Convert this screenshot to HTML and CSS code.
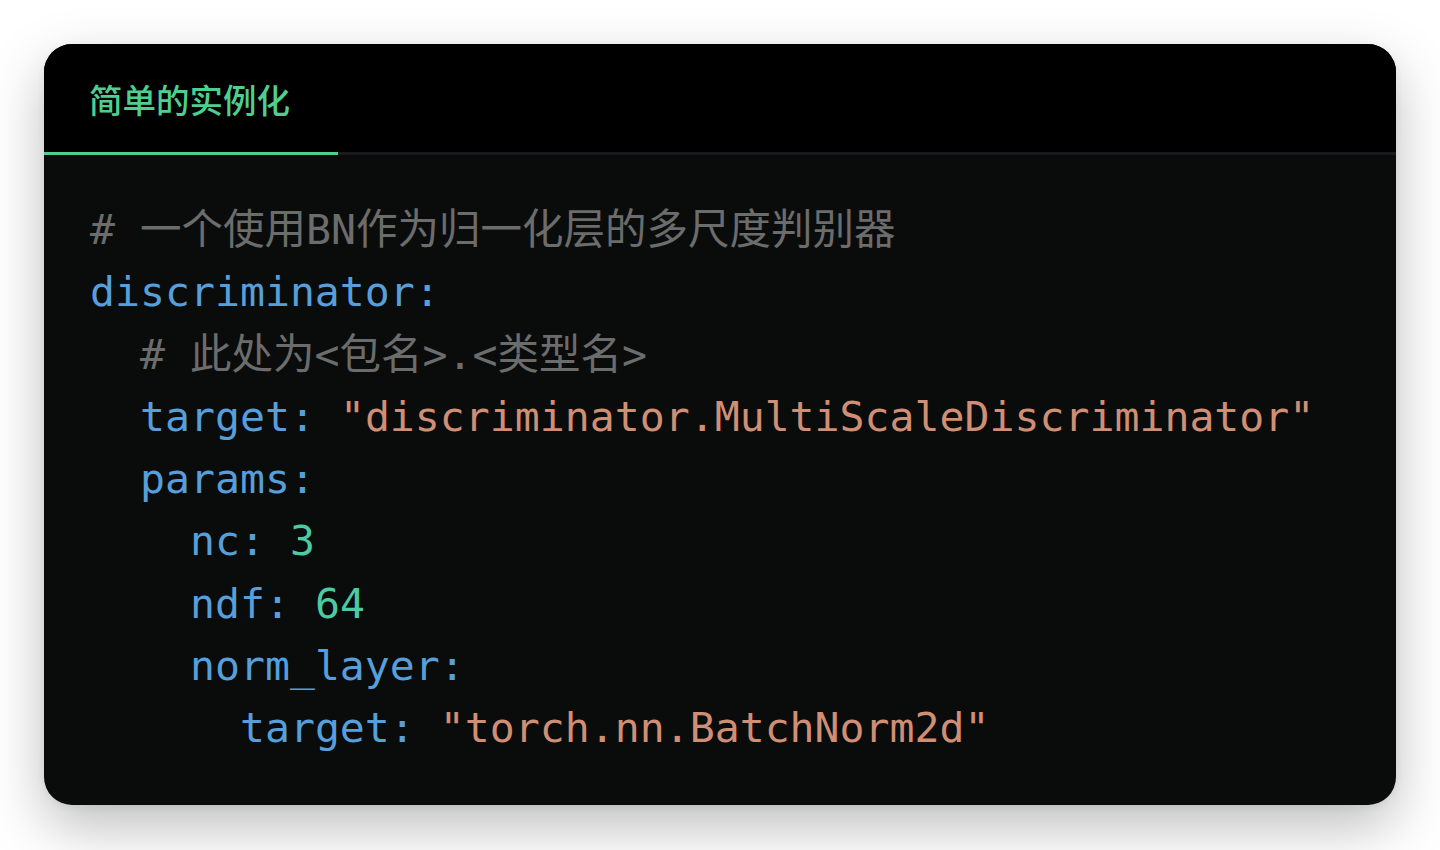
FILE: index.html
```html
<!DOCTYPE html>
<html lang="zh">
<head>
<meta charset="utf-8">
<title>简单的实例化</title>
<link rel="stylesheet" href="styles.css">
</head>
<body>
<div class="card">
  <div class="tabs">
    <div class="tab">简单的实例化</div>
  </div>
  <pre class="code"><span class="c"># 一个使用BN作为归一化层的多尺度判别器</span>
<span class="k">discriminator:</span>
  <span class="c"># 此处为&lt;包名&gt;.&lt;类型名&gt;</span>
  <span class="k">target:</span> <span class="s">"discriminator.MultiScaleDiscriminator"</span>
  <span class="k">params:</span>
    <span class="k">nc:</span> <span class="n">3</span>
    <span class="k">ndf:</span> <span class="n">64</span>
    <span class="k">norm_layer:</span>
      <span class="k">target:</span> <span class="s">"torch.nn.BatchNorm2d"</span></pre>
</div>
</body>
</html>
```

FILE: styles.css
```css
html, body {
  margin: 0;
  padding: 0;
  background: #ffffff;
}

body {
  padding: 44px 44px 0 44px;
  height: 850px;
  box-sizing: border-box;
  overflow: hidden;
}

.card {
  width: 1352px;
  border-radius: 28px;
  overflow: hidden;
  background: #0a0c0c;
  box-shadow: 0 22px 56px rgba(0, 0, 0, 0.26), 0 2px 8px rgba(0, 0, 0, 0.06);
}

.tabs {
  display: flex;
  background: #000000;
  border-bottom: 3px solid #171b1b;
  height: 108px;
}

.tab {
  display: flex;
  align-items: center;
  box-sizing: border-box;
  height: 111px;
  margin-bottom: -3px;
  padding: 0 0 0 45px;
  width: 294px;
  border-bottom: 3px solid #4fcf8f;
  color: #4fcf8f;
  font-family: "Noto Sans CJK SC", "Noto Sans", sans-serif;
  font-size: 33.5px;
  font-weight: 500;
}

.code {
  margin: 0;
  padding: 44px 46px 46px 46px;
  font-family: "DejaVu Sans Mono", "Noto Sans CJK SC", monospace;
  font-size: 41.5px;
  line-height: 62.25px;
  color: #d4d4d4;
  white-space: pre;
}

.c { color: #6c6c6c; }
.k { color: #579fdb; }
.s { color: #d08f74; }
.n { color: #4ccaa4; }
```
